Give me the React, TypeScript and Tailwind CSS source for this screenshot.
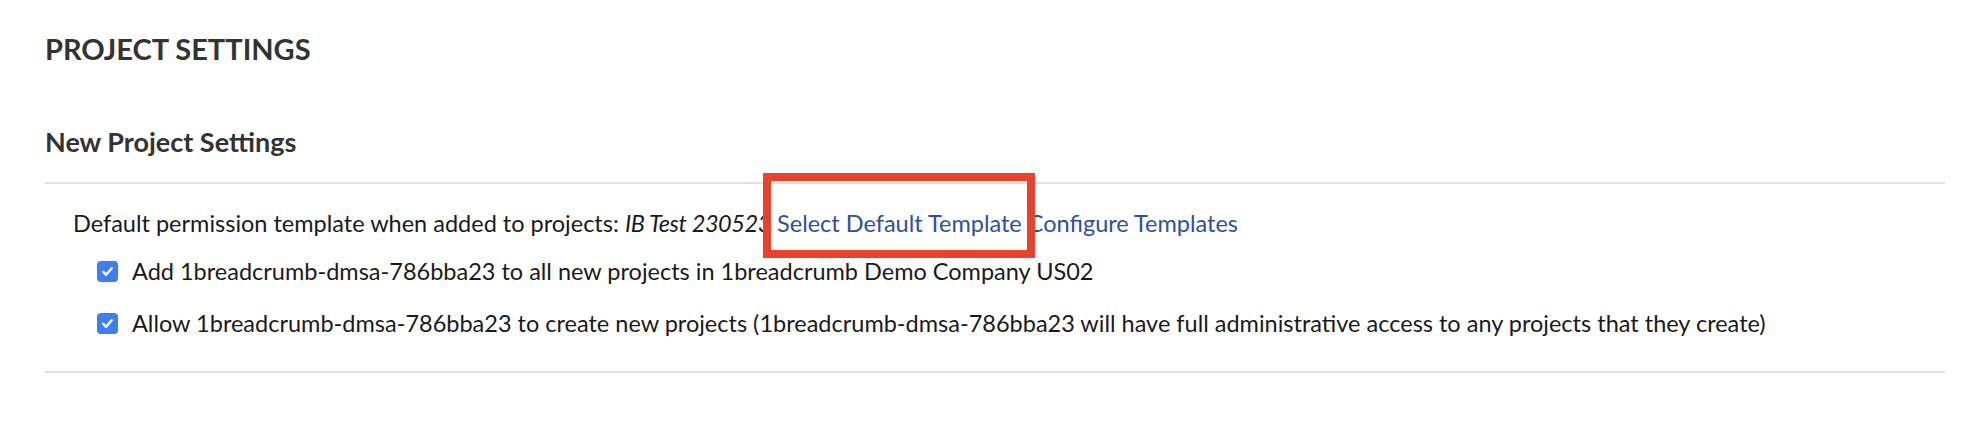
export default function App() {
  const CheckBox = () => (
    <span className="inline-flex h-[21px] w-[21px] shrink-0 items-center justify-center rounded-[4px] bg-[#3d7ef1]">
      <svg viewBox="0 0 16 16" className="h-[15px] w-[15px]" fill="none" stroke="white" strokeWidth="2.6" strokeLinecap="round" strokeLinejoin="round">
        <path d="M3.5 8.5l3 3 6-7" />
      </svg>
    </span>
  );

  return (
    <div className="relative min-h-[422px] w-full bg-white pl-[45px] pr-[29px] pt-[32px] font-['Lato',sans-serif]">
      <h1 className="text-[29px] font-bold leading-[34px] text-[#333]">PROJECT SETTINGS</h1>

      <h2 className="mt-[60px] text-[27px] font-bold leading-[32px] text-[#333]">New Project Settings</h2>

      <div className="mt-[24px] border-t-2 border-[#e0e0e0] pb-[33px] pl-[28px] pt-[24px] text-[23.5px] leading-[30px] text-[#1a1a1a]">
        <p>
          Default permission template when added to projects: <em className="tracking-[-0.4px]">IB Test 230523</em>{' '}
          <a href="#" className="text-[#2c4fa3]">Select Default Template</a>{' '}
          <a href="#" className="text-[#2c4fa3]">Configure Templates</a>
        </p>
        <div className="mt-[18px] flex flex-col gap-[22px] pl-[24px]">
          <label className="flex items-center gap-[14px]">
            <CheckBox />
            <span>Add 1breadcrumb-dmsa-786bba23 to all new projects in 1breadcrumb Demo Company US02</span>
          </label>
          <label className="flex items-center gap-[14px]">
            <CheckBox />
            <span>
              Allow 1breadcrumb-dmsa-786bba23 to create new projects (1breadcrumb-dmsa-786bba23 will have full administrative access to any projects that they create)
            </span>
          </label>
        </div>
      </div>
      <div className="h-[2px] bg-[#e0e0e0]" />

      {/* annotation highlight */}
      <div className="pointer-events-none absolute left-[763px] top-[173px] h-[85px] w-[272px] border-[8px] border-[#e8412c]" />
    </div>
  );
}
